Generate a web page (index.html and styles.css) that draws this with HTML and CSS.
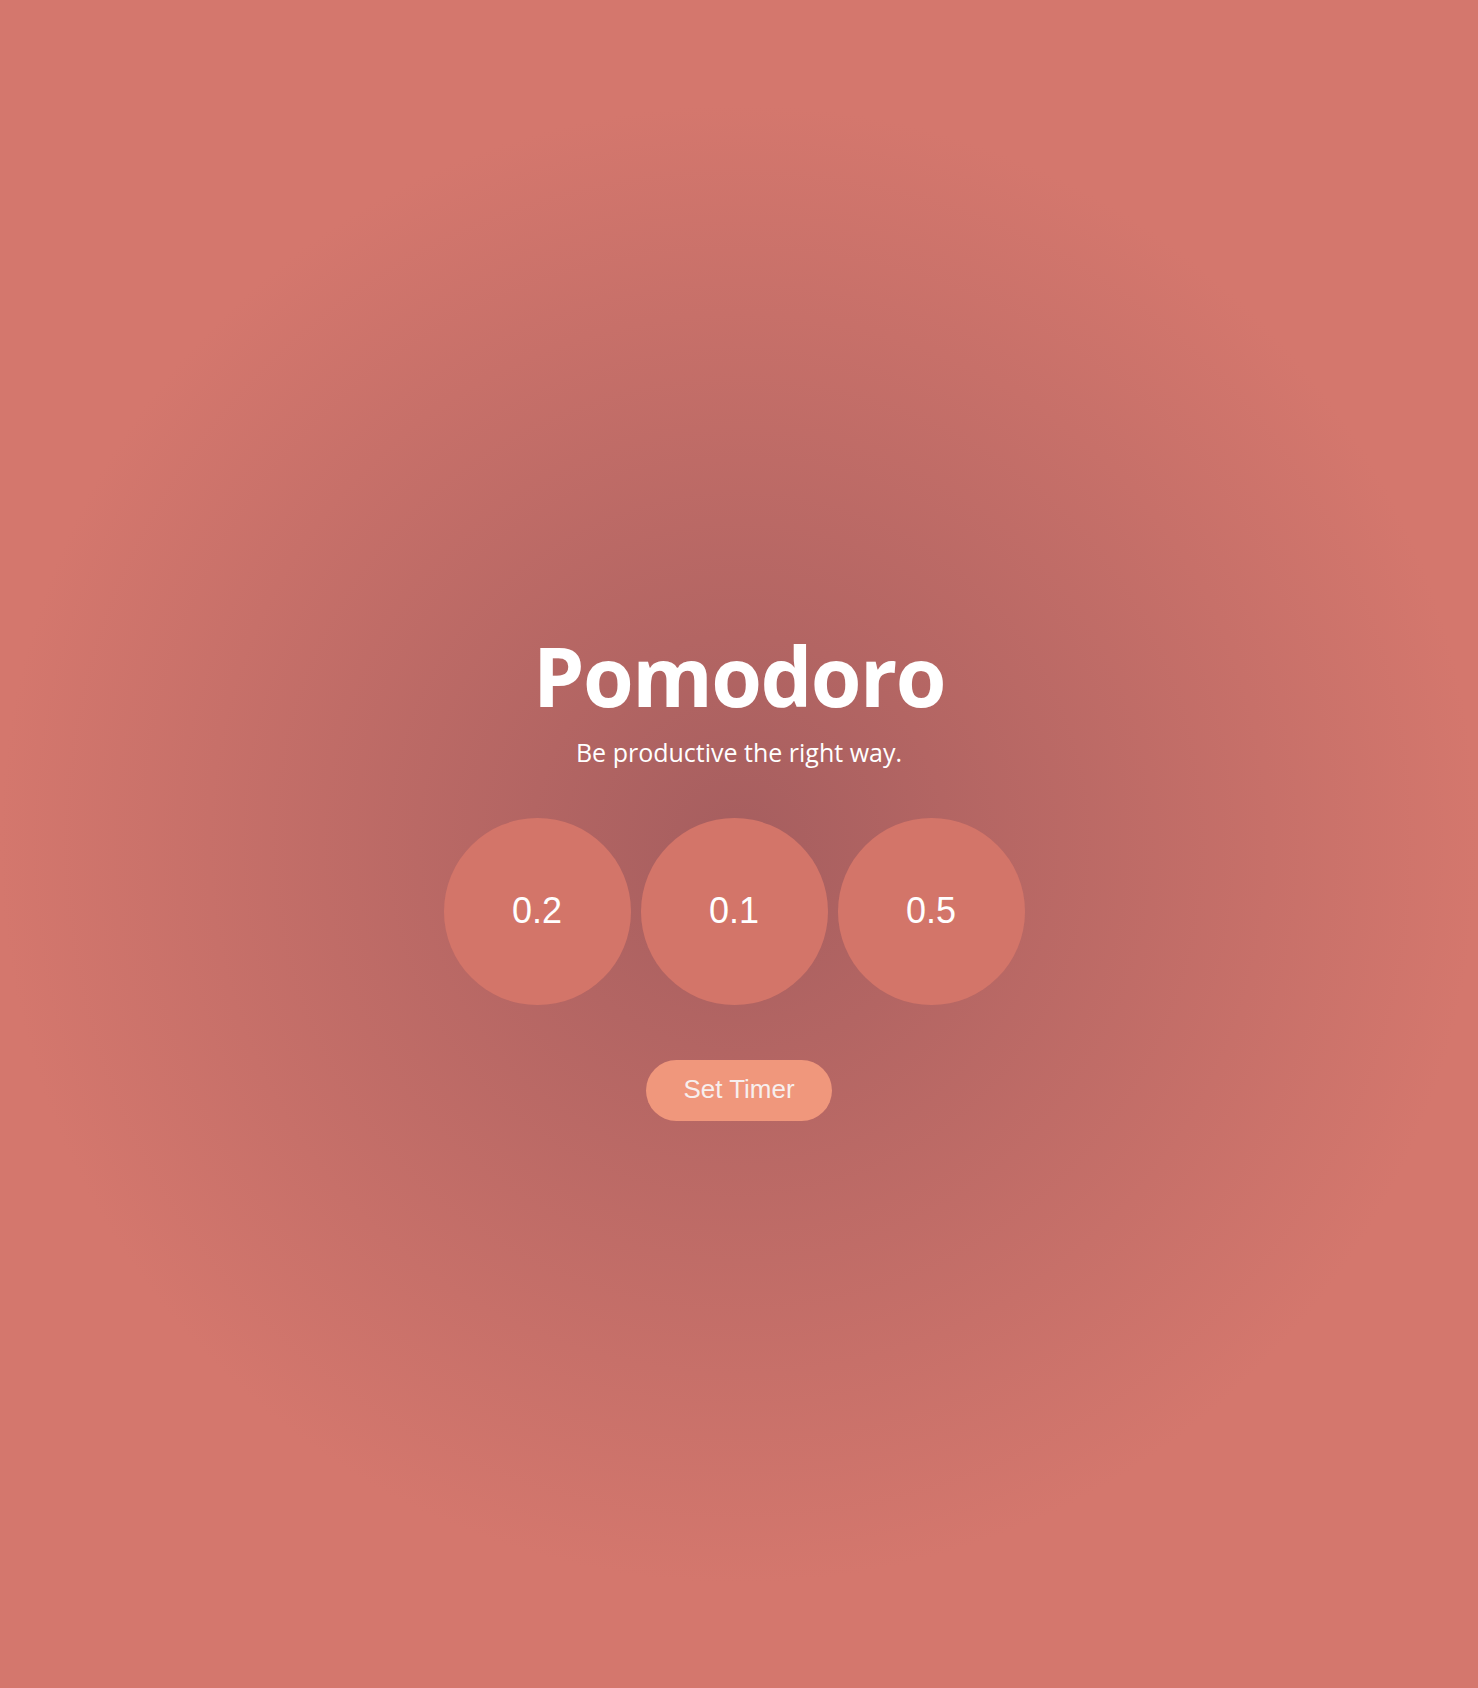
FILE: index.html
```html
<!DOCTYPE html>
<html lang="en">
<head>
<meta charset="utf-8">
<title>Pomodoro</title>
<link rel="stylesheet" href="styles.css">
</head>
<body>
<main class="app">
  <h1 class="title">Pomodoro</h1>
  <p class="subtitle">Be productive the right way.</p>
  <div class="timers">
    <div class="timer">0.2</div>
    <div class="timer">0.1</div>
    <div class="timer">0.5</div>
  </div>
  <button class="set-btn">Set Timer</button>
</main>
</body>
</html>
```

FILE: styles.css
```css
html, body {
  margin: 0;
  padding: 0;
}

body {
  min-height: 100vh;
  background: radial-gradient(circle closest-side at 50% 50%, #a65e5f 0%, #d4776d 100%);
  background-color: #d4776d;
  font-family: "Open Sans", "Noto Sans", sans-serif;
  color: #ffffff;
}

.app {
  min-height: 100vh;
  box-sizing: border-box;
  padding-top: 634px;
  display: flex;
  flex-direction: column;
  align-items: center;
}

.title {
  margin: 0;
  font-size: 82px;
  line-height: 1;
  font-weight: 700;
  letter-spacing: -1.5px;
}

.subtitle {
  margin: 24px 0 0;
  font-size: 25px;
  line-height: 1;
}

.timers {
  margin-top: 53px;
  display: flex;
  gap: 10px;
  padding-right: 10px;
}

.timer {
  width: 187px;
  height: 187px;
  border-radius: 50%;
  background: #d37569;
  display: flex;
  align-items: center;
  justify-content: center;
  padding-bottom: 2px;
  box-sizing: border-box;
  font-family: "Liberation Sans", Arial, sans-serif;
  font-size: 36px;
  color: #ffffff;
}

.set-btn {
  margin-top: 55px;
  width: 186px;
  height: 61px;
  border: none;
  border-radius: 31px;
  background: #f0977c;
  color: #f7efee;
  font-family: "Liberation Sans", Arial, sans-serif;
  font-size: 26px;
  padding: 0 0 2px;
}
```
